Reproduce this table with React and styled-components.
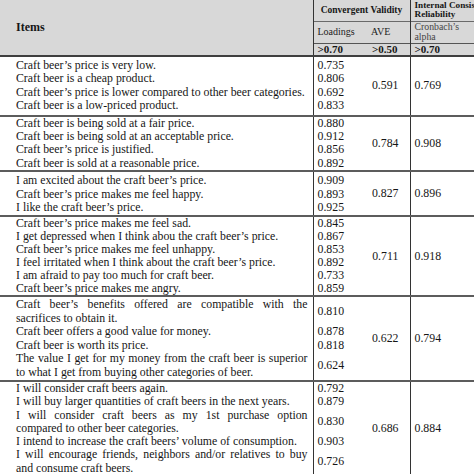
import React from 'react';
import styled, { createGlobalStyle } from 'styled-components';

const GlobalStyle = createGlobalStyle`
  html, body {
    margin: 0;
    padding: 0;
    background: #fff;
    overflow: hidden;
  }
  body {
    font-family: "Liberation Serif", "Times New Roman", serif;
    color: #161616;
  }
`;

const Frame = styled.div`
  width: 474px;
  height: 474px;
  overflow: hidden;
`;

const Table = styled.table`
  border-collapse: collapse;
  table-layout: fixed;
  width: 560px;
`;

const Col = styled.col`
  width: ${(p) => p.$w}px;
`;

const Head = styled.thead`
  background: #d8d8d8;
  border-bottom: 2px solid #3f3f3f;
`;

const HeadRow = styled.tr`
  height: ${(p) => p.$h}px;
`;

const ItemsHead = styled.th`
  text-align: left;
  padding: 0 0 0 16px;
  font-size: 12px;
  font-weight: 700;
  vertical-align: middle;
`;

const GroupHead = styled.th`
  border-left: 1px solid #333;
  padding: 0 4px;
  font-size: ${(p) => (p.$left ? 9.2 : 9.5)}px;
  line-height: 9px;
  font-weight: 700;
  text-align: ${(p) => (p.$left ? 'left' : 'center')};
  white-space: nowrap;
  vertical-align: middle;
`;

const SubHead = styled.td`
  border-top: 1px solid #6a6a6a;
  border-left: ${(p) => (p.$divider ? '1px solid #333' : 'none')};
  padding: 0 ${(p) => (p.$center ? 0 : 4)}px;
  padding-left: ${(p) => (p.$center ? 10 : 4)}px;
  font-size: ${(p) => (p.$note ? 9.8 : 10)}px;
  line-height: 10.5px;
  color: ${(p) => (p.$note ? '#444' : '#222')};
  vertical-align: middle;
`;

const Threshold = styled.td`
  border-top: 1px solid #555;
  border-left: ${(p) => (p.$divider ? '1px solid #333' : 'none')};
  padding: 0 4px;
  padding-left: ${(p) => (p.$center ? 11 : 4)}px;
  font-size: 11px;
  line-height: 11px;
  font-weight: 700;
  vertical-align: middle;
`;

const Group = styled.tbody`
  line-height: ${(p) => p.$lh}px;

  & + & {
    border-top: 2px solid #5c5c5c;
  }
`;

const ItemCell = styled.td`
  padding: ${(p) => p.$top || 0}px 5px ${(p) => p.$bottom || 0}px 16px;
  font-size: 11.8px;
  text-align: justify;
  vertical-align: middle;
`;

const LoadingCell = styled.td`
  border-left: 1px solid #333;
  padding: ${(p) => p.$top || 0}px 0 ${(p) => p.$bottom || 0}px 4px;
  font-size: 11.8px;
  vertical-align: middle;
`;

const AveCell = styled.td`
  font-size: 11.8px;
  text-align: center;
  vertical-align: middle;
`;

const AlphaCell = styled.td`
  border-left: 1px solid #333;
  padding-left: 4px;
  font-size: 11.8px;
  vertical-align: middle;
`;

const groups = [
  {
    ave: '0.591',
    alpha: '0.769',
    pad: [2, 2],
    items: [
      ['Craft beer’s price is very low.', '0.735'],
      ['Craft beer is a cheap product.', '0.806'],
      ['Craft beer’s price is lower compared to other beer categories.', '0.692'],
      ['Craft beer is a low-priced product.', '0.833'],
    ],
  },
  {
    ave: '0.784',
    alpha: '0.908',
    items: [
      ['Craft beer is being sold at a fair price.', '0.880'],
      ['Craft beer is being sold at an acceptable price.', '0.912'],
      ['Craft beer’s price is justified.', '0.856'],
      ['Craft beer is sold at a reasonable price.', '0.892'],
    ],
  },
  {
    ave: '0.827',
    alpha: '0.896',
    pad: [2, 1],
    items: [
      ['I am excited about the craft beer’s price.', '0.909'],
      ['Craft beer’s price makes me feel happy.', '0.893'],
      ['I like the craft beer’s price.', '0.925'],
    ],
  },
  {
    ave: '0.711',
    alpha: '0.918',
    lh: 13,
    items: [
      ['Craft beer’s price makes me feel sad.', '0.845'],
      ['I get depressed when I think abou the craft beer’s price.', '0.867'],
      ['Craft beer’s price makes me feel unhappy.', '0.853'],
      ['I feel irritated when I think about the craft beer’s price.', '0.892'],
      ['I am afraid to pay too much for craft beer.', '0.733'],
      ['Craft beer’s price makes me angry.', '0.859'],
    ],
  },
  {
    ave: '0.622',
    alpha: '0.794',
    pad: [1, 1],
    items: [
      ['Craft beer’s benefits offered are compatible with the sacrifices to obtain it.', '0.810'],
      ['Craft beer offers a good value for money.', '0.878'],
      ['Craft beer is worth its price.', '0.818'],
      [
        'The value I get for my money from the craft beer is superior to what I get from buying other categories of beer.',
        '0.624',
      ],
    ],
  },
  {
    ave: '0.686',
    alpha: '0.884',
    lh: 13.3,
    items: [
      ['I will consider craft beers again.', '0.792'],
      ['I will buy larger quantities of craft beers in the next years.', '0.879'],
      ['I will consider craft beers as my 1st purchase option compared to other beer categories.', '0.830'],
      ['I intend to increase the craft beers’ volume of consumption.', '0.903'],
      ['I will encourage friends, neighbors and/or relatives to buy and consume craft beers.', '0.726'],
    ],
  },
];

const App = () => {
  return (
    <Frame>
      <GlobalStyle />
      <Table>
        <colgroup>
          <Col $w={313} />
          <Col $w={48} />
          <Col $w={49} />
          <Col $w={150} />
        </colgroup>
        <Head>
          <HeadRow $h={21}>
            <ItemsHead rowSpan={3}>Items</ItemsHead>
            <GroupHead colSpan={2}>Convergent Validity</GroupHead>
            <GroupHead $left>
              Internal Consistency
              <br />
              Reliability
            </GroupHead>
          </HeadRow>
          <HeadRow $h={22}>
            <SubHead $divider>Loadings</SubHead>
            <SubHead $center>AVE</SubHead>
            <SubHead $divider $note>
              Cronbach’s
              <br />
              alpha
            </SubHead>
          </HeadRow>
          <HeadRow $h={13}>
            <Threshold $divider>&gt;0.70</Threshold>
            <Threshold $center>&gt;0.50</Threshold>
            <Threshold $divider>&gt;0.70</Threshold>
          </HeadRow>
        </Head>
        {groups.map((group) => {
          const [top, bottom] = group.pad || [0, 0];
          const last = group.items.length - 1;
          return (
            <Group key={group.ave} $lh={group.lh || 13.4}>
              {group.items.map(([text, loading], i) => (
                <tr key={loading + i}>
                  <ItemCell $top={i === 0 ? top : 0} $bottom={i === last ? bottom : 0}>
                    {text}
                  </ItemCell>
                  <LoadingCell $top={i === 0 ? top : 0} $bottom={i === last ? bottom : 0}>
                    {loading}
                  </LoadingCell>
                  {i === 0 && (
                    <>
                      <AveCell rowSpan={group.items.length}>{group.ave}</AveCell>
                      <AlphaCell rowSpan={group.items.length}>{group.alpha}</AlphaCell>
                    </>
                  )}
                </tr>
              ))}
            </Group>
          );
        })}
      </Table>
    </Frame>
  );
};

export default App;
